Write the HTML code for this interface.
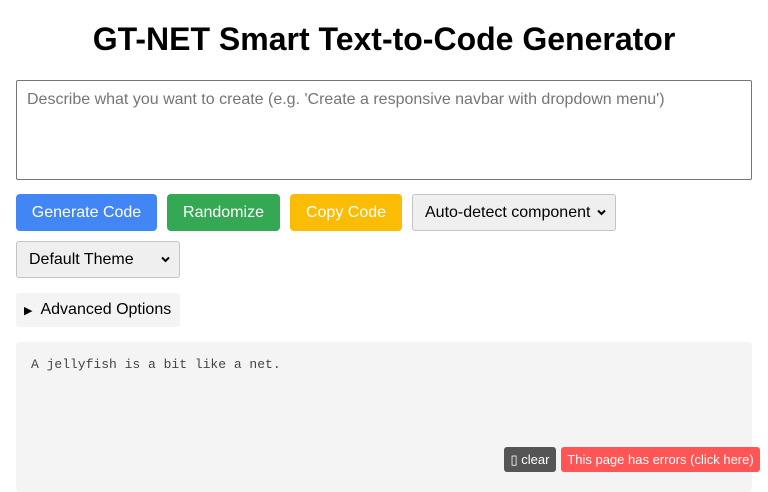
<!DOCTYPE html>
<html><head><style>
body{margin:0;background:#fff;font-family:"Liberation Sans",sans-serif;width:768px;height:480px;overflow:hidden;position:relative}
h1{position:absolute;top:20px;left:0;width:768px;text-align:center;margin:0;font-size:32px;font-weight:bold;color:#000;line-height:38px}
.ta{position:absolute;left:16px;top:80px;width:736px;height:100px;border:1px solid #767676;border-radius:2px;box-sizing:border-box}
.ta span{position:absolute;left:10px;top:10px;color:#757575;font-size:16px}
.btn{position:absolute;top:194px;height:37px;border-radius:4px;color:#fff;font-size:16px;line-height:37px;text-align:center}
.sel{position:absolute;height:37px;border:1px solid #c4c4c4;border-radius:3px;background:#efefef;box-sizing:border-box;font-size:16px;line-height:36px;color:#000;padding-left:12px}
.sel svg{position:absolute;right:9px;top:14px}
.adv{position:absolute;left:16px;top:293px;width:164px;height:34px;background:#f4f4f4;border-radius:3px;font-size:16px;line-height:34px}
.out{position:absolute;left:16px;top:342px;width:736px;height:150px;background:#f4f4f4;border-radius:4px}
.out pre{margin:0;position:absolute;left:15px;top:15px;font-family:"Liberation Mono",monospace;font-size:13px;color:#444}
.b2{position:absolute;top:447px;height:25px;line-height:25px;font-size:13px;color:#fff;border-radius:3px;text-align:center}
</style></head><body>
<h1>GT-NET Smart Text-to-Code Generator</h1>
<div class="ta"><span>Describe what you want to create (e.g. 'Create a responsive navbar with dropdown menu')</span></div>
<div class="btn" style="left:16px;width:141px;background:#4285f4">Generate Code</div>
<div class="btn" style="left:167px;width:113px;background:#34a853">Randomize</div>
<div class="btn" style="left:290px;width:112px;background:#fbbc05">Copy Code</div>
<div class="sel" style="left:412px;top:194px;width:204px">Auto-detect component<svg width="9" height="7" viewBox="0 0 9 7"><path d="M1 1.5L4.5 5L8 1.5" stroke="#000" stroke-width="2" fill="none"/></svg></div>
<div class="sel" style="left:16px;top:241px;width:164px">Default Theme<svg width="9" height="7" viewBox="0 0 9 7"><path d="M1 1.5L4.5 5L8 1.5" stroke="#000" stroke-width="2" fill="none"/></svg></div>
<div class="adv"><span style="font-size:11px;margin-left:8px;margin-right:8px">&#9654;</span>Advanced Options</div>
<div class="out"><pre>A jellyfish is a bit like a net.</pre></div>
<div class="b2" style="left:504px;width:52px;background:#555">▯ clear</div>
<div class="b2" style="left:561px;width:199px;background:#f55">This page has errors (click here)</div>
</body></html>
